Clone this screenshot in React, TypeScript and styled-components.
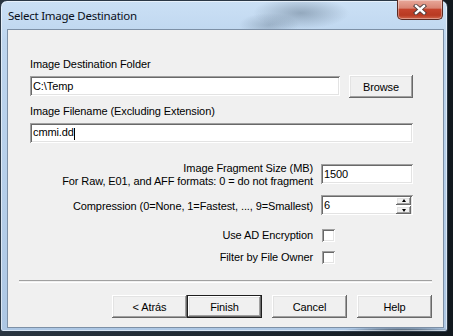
import React from "react";
import styled, { createGlobalStyle, css } from "styled-components";

const Global = createGlobalStyle`
  html, body { margin: 0; padding: 0; }
  body {
    width: 453px; height: 336px; overflow: hidden;
    background: linear-gradient(90deg, #2a3540 0%, #1c252d 60%, #11181e 100%);
    font-family: "Liberation Sans", Arial, sans-serif;
  }
`;

const Window = styled.div`
  box-sizing: border-box;
  width: 448px;
  height: 332px;
  border: 1px solid #2b3846;
  border-radius: 7px 7px 3px 3px;
  padding: 0 3px 3px 6px;
  display: flex;
  flex-direction: column;
  background:
    radial-gradient(ellipse 48px 16px at 300px 12px, rgba(85, 105, 125, 0.45), transparent),
    radial-gradient(ellipse 30px 12px at 268px 24px, rgba(85, 105, 125, 0.35), transparent),
    radial-gradient(ellipse 60px 4px at 400px 330px, rgba(20, 30, 40, 0.8), transparent),
    linear-gradient(180deg, #cbe0f5 0%, #bdd5ee 12%, #b5cee9 60%, #adc7e4 100%);
  box-shadow: inset 0 0 0 1px rgba(255, 255, 255, 0.55);
`;

const TitleBar = styled.div`
  height: 28px;
  display: flex;
  align-items: flex-start;
  flex: none;
`;

const TitleText = styled.div`
  margin: 7px 0 0 1px;
  font-family: "Noto Sans", "Open Sans", sans-serif;
  font-size: 11.5px;
  letter-spacing: -0.25px;
  line-height: 16px;
  color: #0a0f1a;
  flex: 1;
`;

const CloseButton = styled.div`
  box-sizing: border-box;
  width: 46px;
  height: 20px;
  margin: -1px 1px 0 0;
  border: 1px solid #5a2a22;
  border-top: none;
  border-radius: 0 0 5px 5px;
  background: linear-gradient(180deg, #e8a89a 0%, #d98574 42%, #c4432c 50%, #b83a22 80%, #d0664c 100%);
  box-shadow: inset 0 0 0 1px rgba(255, 255, 255, 0.35);
  display: flex;
  align-items: center;
  justify-content: center;
`;

const Client = styled.div`
  flex: 1;
  background: #f0f0f0;
  border: 1px solid #7d90a6;
  display: flex;
  flex-direction: column;
  font-size: 11px;
  letter-spacing: -0.1px;
  color: #000;
`;

const Form = styled.div`
  padding: 28px 30px 0 22px;
  display: flex;
  flex-direction: column;
`;

const Label = styled.div<{ $top?: number; $bottom?: number }>`
  line-height: 13px;
  margin-top: ${(p) => p.$top ?? 0}px;
  margin-bottom: ${(p) => p.$bottom ?? 0}px;
  white-space: nowrap;
`;

const sunken = css`
  box-shadow: inset 1px 1px #a0a0a0, inset -1px -1px #ffffff, inset 2px 2px #696969, inset -2px -2px #e3e3e3;
`;

const raised = css`
  box-shadow: inset -1px -1px #696969, inset 1px 1px #ffffff, inset -2px -2px #a0a0a0, inset 2px 2px #e3e3e3;
`;

const Field = styled.div<{ $width?: number; $top?: number }>`
  box-sizing: border-box;
  height: 20px;
  ${(p) => (p.$width ? `width: ${p.$width}px;` : "")}
  margin-top: ${(p) => p.$top ?? 0}px;
  background: #fff;
  ${sunken}
  padding: 0 2px 0 3px;
  display: flex;
  align-items: center;
  line-height: 13px;
  white-space: nowrap;
`;

const FieldText = styled.span`
  flex: 1;
`;

const Caret = styled.span`
  display: inline-block;
  width: 1px;
  height: 12px;
  background: #000;
  vertical-align: middle;
`;

const FolderRow = styled.div`
  display: flex;
  align-items: flex-start;
  height: 23px;
`;

const Button = styled.button<{ $default?: boolean; $left?: number; $width?: number }>`
  box-sizing: border-box;
  width: ${(p) => p.$width ?? 75}px;
  height: 23px;
  margin: 0 0 0 ${(p) => p.$left ?? 0}px;
  padding: 0;
  background: #f0f0f0;
  border: ${(p) => (p.$default ? "1px solid #1e1e1e" : "none")};
  ${raised}
  font-family: "Liberation Sans", Arial, sans-serif;
  font-size: 11px;
  letter-spacing: -0.1px;
  color: #000;
  flex: none;
`;

const SettingRow = styled.div<{ $top: number }>`
  display: grid;
  grid-template-columns: 1fr 92px;
  column-gap: 8px;
  align-items: center;
  margin-top: ${(p) => p.$top}px;
`;

const SettingLabel = styled.div<{ $pad?: number }>`
  justify-self: end;
  text-align: right;
  line-height: 13px;
  white-space: nowrap;
  padding-top: ${(p) => p.$pad ?? 0}px;
`;

const SettingControl = styled.div`
  align-self: start;
`;

const Spinner = styled.div`
  display: flex;
  flex-direction: column;
  gap: 1px;
  align-self: stretch;
  padding-top: 2px;
`;

const SpinButton = styled.div`
  box-sizing: border-box;
  width: 15px;
  height: 8px;
  background: #f0f0f0;
  ${raised}
  display: flex;
  align-items: center;
  justify-content: center;
`;

const Arrow = styled.span<{ $up?: boolean }>`
  width: 0;
  height: 0;
  border-left: 2.5px solid transparent;
  border-right: 2.5px solid transparent;
  ${(p) => (p.$up ? "border-bottom: 3px solid #000;" : "border-top: 3px solid #000;")}
  margin-top: ${(p) => (p.$up ? -1 : 0)}px;
`;

const CheckBox = styled.div`
  box-sizing: border-box;
  width: 13px;
  height: 13px;
  margin-left: 1px;
  background: #fff;
  ${sunken}
`;

const Separator = styled.div`
  margin: 16px 11px 0;
  height: 1px;
  border-top: 1px solid #a0a0a0;
  border-bottom: 1px solid #ffffff;
`;

const ButtonBar = styled.div`
  margin-top: 12px;
  padding-right: 11px;
  display: flex;
  justify-content: flex-end;
`;

export default function App() {
  return (
    <>
      <Global />
      <Window>
        <TitleBar>
          <TitleText>Select Image Destination</TitleText>
          <CloseButton>
            <svg width="14" height="11" viewBox="0 0 14 11">
              <path d="M3 2 L11 9 M11 2 L3 9" stroke="#4a3a3a" strokeWidth="4.2" strokeLinecap="square" fill="none" />
              <path d="M3 2 L11 9 M11 2 L3 9" stroke="#ffffff" strokeWidth="2.4" strokeLinecap="square" fill="none" />
            </svg>
          </CloseButton>
        </TitleBar>
        <Client>
          <Form>
            <Label $bottom={4}>Image Destination Folder</Label>
            <FolderRow>
              <Field $width={310} $top={1}>
                <FieldText>C:\Temp</FieldText>
              </Field>
              <Button $left={9} $width={64}>Browse</Button>
            </FolderRow>
            <Label $top={7} $bottom={5}>Image Filename (Excluding Extension)</Label>
            <Field>
              <FieldText>
                cmmi.dd<Caret />
              </FieldText>
            </Field>

            <SettingRow $top={19}>
              <SettingLabel>
                Image Fragment Size (MB)
                <br />
                For Raw, E01, and AFF formats: 0 = do not fragment
              </SettingLabel>
              <SettingControl>
                <Field $top={2}>
                  <FieldText>1500</FieldText>
                </Field>
              </SettingControl>
            </SettingRow>

            <SettingRow $top={7}>
              <SettingLabel $pad={2}>Compression (0=None, 1=Fastest, ..., 9=Smallest)</SettingLabel>
              <Field>
                <FieldText>6</FieldText>
                <Spinner>
                  <SpinButton>
                    <Arrow $up />
                  </SpinButton>
                  <SpinButton>
                    <Arrow />
                  </SpinButton>
                </Spinner>
              </Field>
            </SettingRow>

            <SettingRow $top={14}>
              <SettingLabel>Use AD Encryption</SettingLabel>
              <CheckBox />
            </SettingRow>

            <SettingRow $top={9}>
              <SettingLabel>Filter by File Owner</SettingLabel>
              <CheckBox />
            </SettingRow>
          </Form>
          <Separator />
          <ButtonBar>
            <Button>&lt; Atrás</Button>
            <Button $default>Finish</Button>
            <Button $left={10}>Cancel</Button>
            <Button $left={10}>Help</Button>
          </ButtonBar>
        </Client>
      </Window>
    </>
  );
}
